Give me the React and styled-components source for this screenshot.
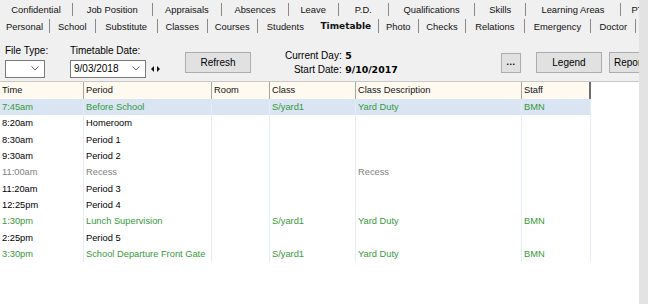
import styled, { createGlobalStyle } from "styled-components";

const GlobalStyle = createGlobalStyle`
  body {
    margin: 0;
    font-family: "Liberation Sans", Arial, sans-serif;
    color: #000;
  }
`;

const topTabs = [
  { label: "Confidential", w: 73 },
  { label: "Job Position", w: 79.5 },
  { label: "Appraisals", w: 69.8 },
  { label: "Absences", w: 66.4 },
  { label: "Leave", w: 50 },
  { label: "P.D.", w: 50.3 },
  { label: "Qualifications", w: 86.3 },
  { label: "Skills", w: 51 },
  { label: "Learning Areas", w: 94.4 },
  { label: "PT", w: 34.6, noSep: true },
];

const bottomTabs = [
  { label: "Personal", w: 50 },
  { label: "School", w: 45.7 },
  { label: "Substitute", w: 62 },
  { label: "Classes", w: 50 },
  { label: "Courses", w: 50 },
  { label: "Students", w: 56.3, noSep: true },
  { label: "Timetable", w: 64.7, active: true },
  { label: "Photo", w: 40.3 },
  { label: "Checks", w: 47 },
  { label: "Relations", w: 58.7 },
  { label: "Emergency", w: 66.6 },
  { label: "Doctor", w: 45 },
];

const rows = [
  { time: "7:45am", period: "Before School", room: "", cls: "S/yard1", desc: "Yard Duty", staff: "BMN", tone: "green", selected: true },
  { time: "8:20am", period: "Homeroom" },
  { time: "8:30am", period: "Period 1" },
  { time: "9:30am", period: "Period 2" },
  { time: "11:00am", period: "Recess", desc: "Recess", tone: "grey" },
  { time: "11:20am", period: "Period 3" },
  { time: "12:25pm", period: "Period 4" },
  { time: "1:30pm", period: "Lunch Supervision", cls: "S/yard1", desc: "Yard Duty", staff: "BMN", tone: "green" },
  { time: "2:25pm", period: "Period 5" },
  { time: "3:30pm", period: "School Departure Front Gate", cls: "S/yard1", desc: "Yard Duty", staff: "BMN", tone: "green" },
];

const Chevron = () => (
  <svg width="8" height="5" viewBox="0 0 8 5">
    <polyline points="0.5,0.5 4,4 7.5,0.5" fill="none" stroke="#606060" strokeWidth="1" />
  </svg>
);

const StepArrows = () => (
  <svg width="9" height="6" viewBox="0 0 9 6">
    <polygon points="3,0 3,6 0,3" fill="#111" />
    <polygon points="6,0 6,6 9,3" fill="#111" />
  </svg>
);

const App = () => {
  return (
    <>
      <GlobalStyle />
      <Page>
        <Main>
          <TabRow $h={16}>
            {topTabs.map((t) => (
              <Tab key={t.label} $w={t.w} $sep={!t.noSep}>
                {t.label}
              </Tab>
            ))}
          </TabRow>
          <TabRow $h={17}>
            {bottomTabs.map((t) => (
              <Tab key={t.label} $w={t.w} $sep={!t.noSep} $active={t.active}>
                {t.label}
              </Tab>
            ))}
          </TabRow>

          <Toolbar>
            <Field $w={40}>
              <Label>File Type:</Label>
              <Combo $w={40}>
                <span></span>
                <Chevron />
              </Combo>
            </Field>
            <Field $w={90} $ml={25}>
              <Label>Timetable Date:</Label>
              <ComboLine>
                <Combo $w={76}>
                  <span>9/03/2018</span>
                  <Chevron />
                </Combo>
                <Steps>
                  <StepArrows />
                </Steps>
              </ComboLine>
            </Field>
            <Button $ml={25} $w={66}>Refresh</Button>
            <Info>
              <InfoLabel>Current Day:</InfoLabel>
              <InfoValue>5</InfoValue>
              <InfoLabel>Start Date:</InfoLabel>
              <InfoValue>9/10/2017</InfoValue>
            </Info>
            <Button $ml={103.3} $w={20} $h={20} $top={20}>
              <Dots>...</Dots>
            </Button>
            <Button $ml={15} $w={66}>Legend</Button>
            <Button $ml={7} $w={66} $left>Report</Button>
          </Toolbar>

          <Table>
            <HeadRow>
              <HeadCell>Time</HeadCell>
              <HeadCell>Period</HeadCell>
              <HeadCell>Room</HeadCell>
              <HeadCell>Class</HeadCell>
              <HeadCell>Class Description</HeadCell>
              <HeadCell $last>Staff</HeadCell>
            </HeadRow>
            {rows.map((r) => (
              <BodyRow key={r.time} $selected={r.selected} $tone={r.tone}>
                <Cell>{r.time}</Cell>
                <Cell>{r.period}</Cell>
                <Cell>{r.room}</Cell>
                <Cell>{r.cls}</Cell>
                <Cell>{r.desc}</Cell>
                <Cell>{r.staff}</Cell>
              </BodyRow>
            ))}
          </Table>
        </Main>
        <Edge />
      </Page>
    </>
  );
};

const Page = styled.div`
  display: flex;
  width: 648px;
  height: 304px;
  overflow: hidden;
  background: #f0f0f0;
`;

const Main = styled.div`
  width: 639px;
  flex-shrink: 0;
  display: flex;
  flex-direction: column;
  overflow: hidden;
`;

const Edge = styled.div`
  flex: 1;
  background: #e3e3e3;
`;

const TabRow = styled.div`
  display: flex;
  height: ${(p) => p.$h}px;
  padding-top: 3px;
  box-sizing: border-box;
  white-space: nowrap;
  flex-shrink: 0;
`;

const Tab = styled.div`
  flex: 0 0 ${(p) => p.$w}px;
  display: flex;
  align-items: center;
  justify-content: center;
  box-sizing: border-box;
  border-right: 1px solid ${(p) => (p.$sep ? "#8a8a8a" : "transparent")};
  font-size: ${(p) => (p.$active ? "9px" : "9.4px")};
  font-family: ${(p) => (p.$active ? '"DejaVu Sans", sans-serif' : "inherit")};
  font-weight: ${(p) => (p.$active ? 700 : 400)};
  color: #111;
`;

const Toolbar = styled.div`
  height: 48px;
  flex-shrink: 0;
  display: flex;
  align-items: flex-start;
  padding-left: 5px;
  font-size: 10px;
  white-space: nowrap;
`;

const Field = styled.div`
  display: flex;
  flex-direction: column;
  flex: 0 0 ${(p) => p.$w}px;
  width: ${(p) => p.$w}px;
  min-width: 0;
  margin-left: ${(p) => p.$ml || 0}px;
  padding-top: 12px;
`;

const Label = styled.div`
  height: 12px;
  line-height: 12px;
  margin-bottom: 2.5px;
`;

const ComboLine = styled.div`
  display: flex;
  align-items: center;
`;

const Combo = styled.div`
  width: ${(p) => p.$w}px;
  height: 18px;
  box-sizing: border-box;
  border: 1px solid #7a7a7a;
  background: #fff;
  display: flex;
  align-items: center;
  justify-content: space-between;
  padding: 0 5px 0 3px;
  font-size: 10px;
`;

const Steps = styled.div`
  margin-left: 5px;
  display: flex;
  align-items: center;
`;

const Button = styled.div`
  flex-shrink: 0;
  margin-left: ${(p) => p.$ml || 0}px;
  margin-top: ${(p) => p.$top || 19}px;
  width: ${(p) => p.$w}px;
  height: ${(p) => p.$h || 21}px;
  box-sizing: border-box;
  border: 1px solid #adadad;
  background: #e1e1e1;
  display: flex;
  align-items: center;
  justify-content: ${(p) => (p.$left ? "flex-start" : "center")};
  padding-left: ${(p) => (p.$left ? "4px" : "0")};
  font-size: 10px;
`;

const Dots = styled.span`
  font-weight: 700;
  font-size: 9px;
  letter-spacing: 0.5px;
  margin-top: -2px;
`;

const Info = styled.div`
  flex-shrink: 0;
  width: 116px;
  margin-left: 30.7px;
  padding-top: 16px;
  display: grid;
  grid-template-columns: 60px auto;
  column-gap: 3.5px;
  line-height: 14px;
`;

const InfoLabel = styled.div`
  text-align: right;
  font-size: 10px;
`;

const InfoValue = styled.div`
  font-family: "DejaVu Sans", sans-serif;
  font-weight: 700;
  font-size: 9.4px;
`;

const Table = styled.div`
  flex: 1;
  background: #fff;
  border-top: 1px solid #c8c8c8;
  font-size: 9.3px;
  white-space: nowrap;
`;

const columns = "84px 128px 58px 86px 166px 69px";

const HeadRow = styled.div`
  width: 591px;
  height: 17px;
  display: grid;
  grid-template-columns: ${columns};
  background: #fffaf0;
`;

const HeadCell = styled.div`
  box-sizing: border-box;
  padding-left: 2px;
  line-height: 17px;
  border-right: ${(p) => (p.$last ? "2px solid #6e6e6e" : "1px solid #a5a5a5")};
  color: #111;
`;

const toneColor = {
  green: "#36993a",
  grey: "#808080",
};

const BodyRow = styled.div`
  width: 591px;
  height: 16.33px;
  display: grid;
  grid-template-columns: ${columns};
  background: ${(p) => (p.$selected ? "#d9e5f3" : "#fff")};
  color: ${(p) => toneColor[p.$tone] || "#000"};
`;

const Cell = styled.div`
  box-sizing: border-box;
  padding-left: 2px;
  line-height: 16.33px;
  border-right: 1px solid #e4edf9;
  overflow: hidden;
`;

export default App;
